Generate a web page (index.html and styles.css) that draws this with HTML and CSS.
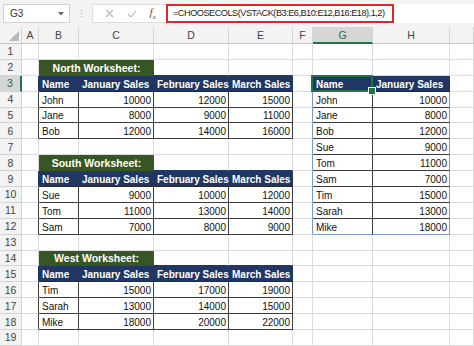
FILE: index.html
```html
<!DOCTYPE html>
<html lang="en">

<head>
    <meta charset="UTF-8">
    <meta name="viewport" content="width=device-width, initial-scale=1.0">
    <title>CHOOSECOLS VSTACK</title>
    <link rel="stylesheet" href="styles.css">
</head>

<body>
    <div class="topbar">
        <div class="namebox">
            <span>G3</span>
            <svg width="6" height="4" viewBox="0 0 6 4"><path d="M0 0h6L3 3.5z" fill="#666"/></svg>
        </div>
        <div class="grip"><i></i><i></i><i></i></div>
        <div class="btnbox">
            <svg class="icon" width="9" height="9" viewBox="0 0 9 9"><path d="M1 1l7 7M8 1l-7 7" stroke="#b4b4b4" stroke-width="1.1"/></svg>
            <svg class="icon" width="10" height="8" viewBox="0 0 10 8"><path d="M1 4.2l2.8 2.8L9 1" stroke="#b4b4b4" stroke-width="1.1" fill="none"/></svg>
            <span class="fx">f<sub>x</sub></span>
        </div>
        <div class="formula">
            <div class="hl">=CHOOSECOLS(VSTACK(B3:E6,B10:E12,B16:E18),1,2)</div>
        </div>
    </div>

    <table class="sheet">
        <colgroup>
            <col style="width:22px">
            <col style="width:17px">
            <col style="width:40px">
            <col style="width:75px">
            <col style="width:75px">
            <col style="width:64px">
            <col style="width:20px">
            <col style="width:60px">
            <col style="width:77px">
            <col style="width:24px">
        </colgroup>
        <tr class="colhead">
            <th class="corner"><svg width="10" height="10" viewBox="0 0 10 10"><path d="M10 0v10H0z" fill="#b9b9b9"/></svg></th>
            <th>A</th><th>B</th><th>C</th><th>D</th><th>E</th><th>F</th><th class="on">G</th><th>H</th><th></th>
        </tr>
        <tr><th>1</th><td></td><td></td><td></td><td></td><td></td><td></td><td></td><td></td><td></td></tr>
        <tr><th>2</th><td></td><td class="g" colspan="2">North Worksheet:</td><td class="ab"></td><td class="ab"></td><td></td><td></td><td></td><td></td></tr>
        <tr><th class="on">3</th><td class="lh"></td><td class="h">Name</td><td class="h">January Sales</td><td class="h">February Sales</td><td class="h">March Sales</td><td class="lh"></td><td class="h sel">Name</td><td class="h">January Sales</td><td></td></tr>
        <tr><th>4</th><td class="le"></td><td class="c">John</td><td class="c n">10000</td><td class="c n">12000</td><td class="c n">15000</td><td class="bl"></td><td class="c">John</td><td class="c n br">10000</td><td></td></tr>
        <tr><th>5</th><td class="le"></td><td class="c">Jane</td><td class="c n">8000</td><td class="c n">9000</td><td class="c n">11000</td><td class="bl"></td><td class="c">Jane</td><td class="c n br">8000</td><td></td></tr>
        <tr><th>6</th><td class="le"></td><td class="c">Bob</td><td class="c n">12000</td><td class="c n">14000</td><td class="c n">16000</td><td class="bl"></td><td class="c">Bob</td><td class="c n br">12000</td><td></td></tr>
        <tr><th>7</th><td></td><td></td><td></td><td></td><td></td><td class="bl"></td><td class="c">Sue</td><td class="c n br">9000</td><td></td></tr>
        <tr><th>8</th><td></td><td class="g" colspan="2">South Worksheet:</td><td class="ab"></td><td class="ab"></td><td class="bl"></td><td class="c">Tom</td><td class="c n br">11000</td><td></td></tr>
        <tr><th>9</th><td class="lh"></td><td class="h">Name</td><td class="h">January Sales</td><td class="h">February Sales</td><td class="h">March Sales</td><td class="bl"></td><td class="c">Sam</td><td class="c n br">7000</td><td></td></tr>
        <tr><th>10</th><td class="le"></td><td class="c">Sue</td><td class="c n">9000</td><td class="c n">10000</td><td class="c n">12000</td><td class="bl"></td><td class="c">Tim</td><td class="c n br">15000</td><td></td></tr>
        <tr><th>11</th><td class="le"></td><td class="c">Tom</td><td class="c n">11000</td><td class="c n">13000</td><td class="c n">14000</td><td class="bl"></td><td class="c">Sarah</td><td class="c n br">13000</td><td></td></tr>
        <tr><th>12</th><td class="le"></td><td class="c">Sam</td><td class="c n">7000</td><td class="c n">8000</td><td class="c n">9000</td><td class="bl"></td><td class="c bb">Mike</td><td class="c n br bb">18000</td><td></td></tr>
        <tr><th>13</th><td></td><td></td><td></td><td></td><td></td><td></td><td></td><td></td><td></td></tr>
        <tr><th>14</th><td></td><td class="g" colspan="2">West Worksheet:</td><td class="ab"></td><td class="ab"></td><td></td><td></td><td></td><td></td></tr>
        <tr><th>15</th><td class="lh"></td><td class="h">Name</td><td class="h">January Sales</td><td class="h">February Sales</td><td class="h">March Sales</td><td></td><td></td><td></td><td></td></tr>
        <tr><th>16</th><td class="le"></td><td class="c">Tim</td><td class="c n">15000</td><td class="c n">17000</td><td class="c n">19000</td><td></td><td></td><td></td><td></td></tr>
        <tr><th>17</th><td class="le"></td><td class="c">Sarah</td><td class="c n">13000</td><td class="c n">14000</td><td class="c n">15000</td><td></td><td></td><td></td><td></td></tr>
        <tr><th>18</th><td class="le"></td><td class="c">Mike</td><td class="c n">18000</td><td class="c n">20000</td><td class="c n">22000</td><td></td><td></td><td></td><td></td></tr>
        <tr><th>19</th><td></td><td></td><td></td><td></td><td></td><td></td><td></td><td></td><td></td></tr>
    </table>
</body>

</html>
```

FILE: styles.css
```css
* {
    margin: 0;
    padding: 0;
    box-sizing: border-box;
}

body {
    background-color: #fff;
    font-family: "Liberation Sans", Arial, sans-serif;
    overflow: hidden;
    width: 474px;
    height: 346px;
}

/* formula bar */
.topbar {
    height: 27px;
    background-color: #f3f3f3;
    display: flex;
    align-items: center;
    padding-left: 3px;
}

.namebox {
    width: 67px;
    height: 19px;
    background-color: #fff;
    border: 1px solid #d2d2d2;
    display: flex;
    align-items: center;
    justify-content: space-between;
    padding: 0 5px 0 6px;
    font-size: 10px;
    color: #333;
}

.grip {
    width: 22px;
    display: flex;
    flex-direction: column;
    align-items: center;
    gap: 2px;
}

.grip i {
    width: 1px;
    height: 1px;
    background-color: #aaa;
}

.btnbox {
    width: 74px;
    height: 19px;
    background-color: #fff;
    border: 1px solid #dcdcdc;
    border-right: none;
    display: flex;
    align-items: center;
    justify-content: space-around;
    padding: 0 4px 0 6px;
}

.fx {
    font-family: "Liberation Serif", serif;
    font-style: italic;
    font-size: 11px;
    color: #555;
}

.fx sub {
    font-size: 7px;
}

.formula {
    flex: 1;
    height: 19px;
    background-color: #fff;
}

.hl {
    width: 228px;
    height: 19px;
    border: 2px solid #e0262b;
    padding-left: 5px;
    font-size: 9.2px;
    letter-spacing: -0.5px;
    line-height: 15px;
    color: #222;
    white-space: nowrap;
}

/* grid */
.sheet {
    table-layout: fixed;
    width: 474px;
    border-spacing: 0;
    border-collapse: separate;
    font-size: 10px;
    color: #111;
}

.sheet tr {
    height: 15.9px;
}

.sheet tr.colhead {
    height: 17px;
}

.sheet th {
    background-color: #f3f3f3;
    color: #444;
    font-weight: normal;
    font-size: 10.5px;
    border-right: 1px solid #d4d4d4;
    border-bottom: 1px solid #d4d4d4;
    text-align: center;
}

.colhead th {
    border-bottom-color: #c4c4c4;
}

.corner {
    text-align: right;
    vertical-align: bottom;
    padding: 0 2px 2px 0;
}

.corner svg {
    display: block;
    margin-left: auto;
}

.sheet th.on {
    background-color: #d6d6d6;
    color: #1e6b41;
}

.colhead th.on {
    border-bottom: 2px solid #217346;
}

.sheet tr > th.on:first-child {
    border-right: 2px solid #217346;
}

.sheet td {
    border-right: 1px solid #dcdcdc;
    border-bottom: 1px solid #dcdcdc;
    padding: 0 2px 0 3px;
    white-space: nowrap;
    overflow: visible;
    vertical-align: bottom;
    line-height: 13px;
}

.sheet td.c {
    border-right-color: #3c3c3c;
    border-bottom-color: #3c3c3c;
}

.sheet td.n {
    text-align: right;
}

.sheet td.h {
    background-color: #203764;
    color: #fff;
    font-weight: bold;
    border-right-color: #203764;
    border-bottom-color: #2a2a2a;
}

.sheet td.g {
    background-color: #375623;
    color: #fff;
    font-weight: bold;
    font-size: 10.5px;
    text-align: center;
    border-right-color: #375623;
    border-bottom-color: #375623;
}

.sheet td.ab {
    border-bottom-color: #203764;
}

.sheet td.lh {
    border-right-color: #203764;
}

.sheet td.le {
    border-right-color: #3c3c3c;
}

.sheet td.bl {
    border-right-color: #7a96cf;
}

.sheet td.br {
    border-right-color: #7a96cf;
}

.sheet td.bb {
    border-bottom-color: #7a96cf;
}

/* selected cell */
.sheet td.sel {
    position: relative;
}

.sel::after {
    content: '';
    position: absolute;
    left: -2px;
    top: -1px;
    right: -1px;
    bottom: -1px;
    border: 2px solid #217346;
}

.sel::before {
    content: '';
    position: absolute;
    right: -4px;
    bottom: -4px;
    width: 6px;
    height: 6px;
    background-color: #217346;
    border: 1px solid #fff;
    z-index: 1;
}
```
